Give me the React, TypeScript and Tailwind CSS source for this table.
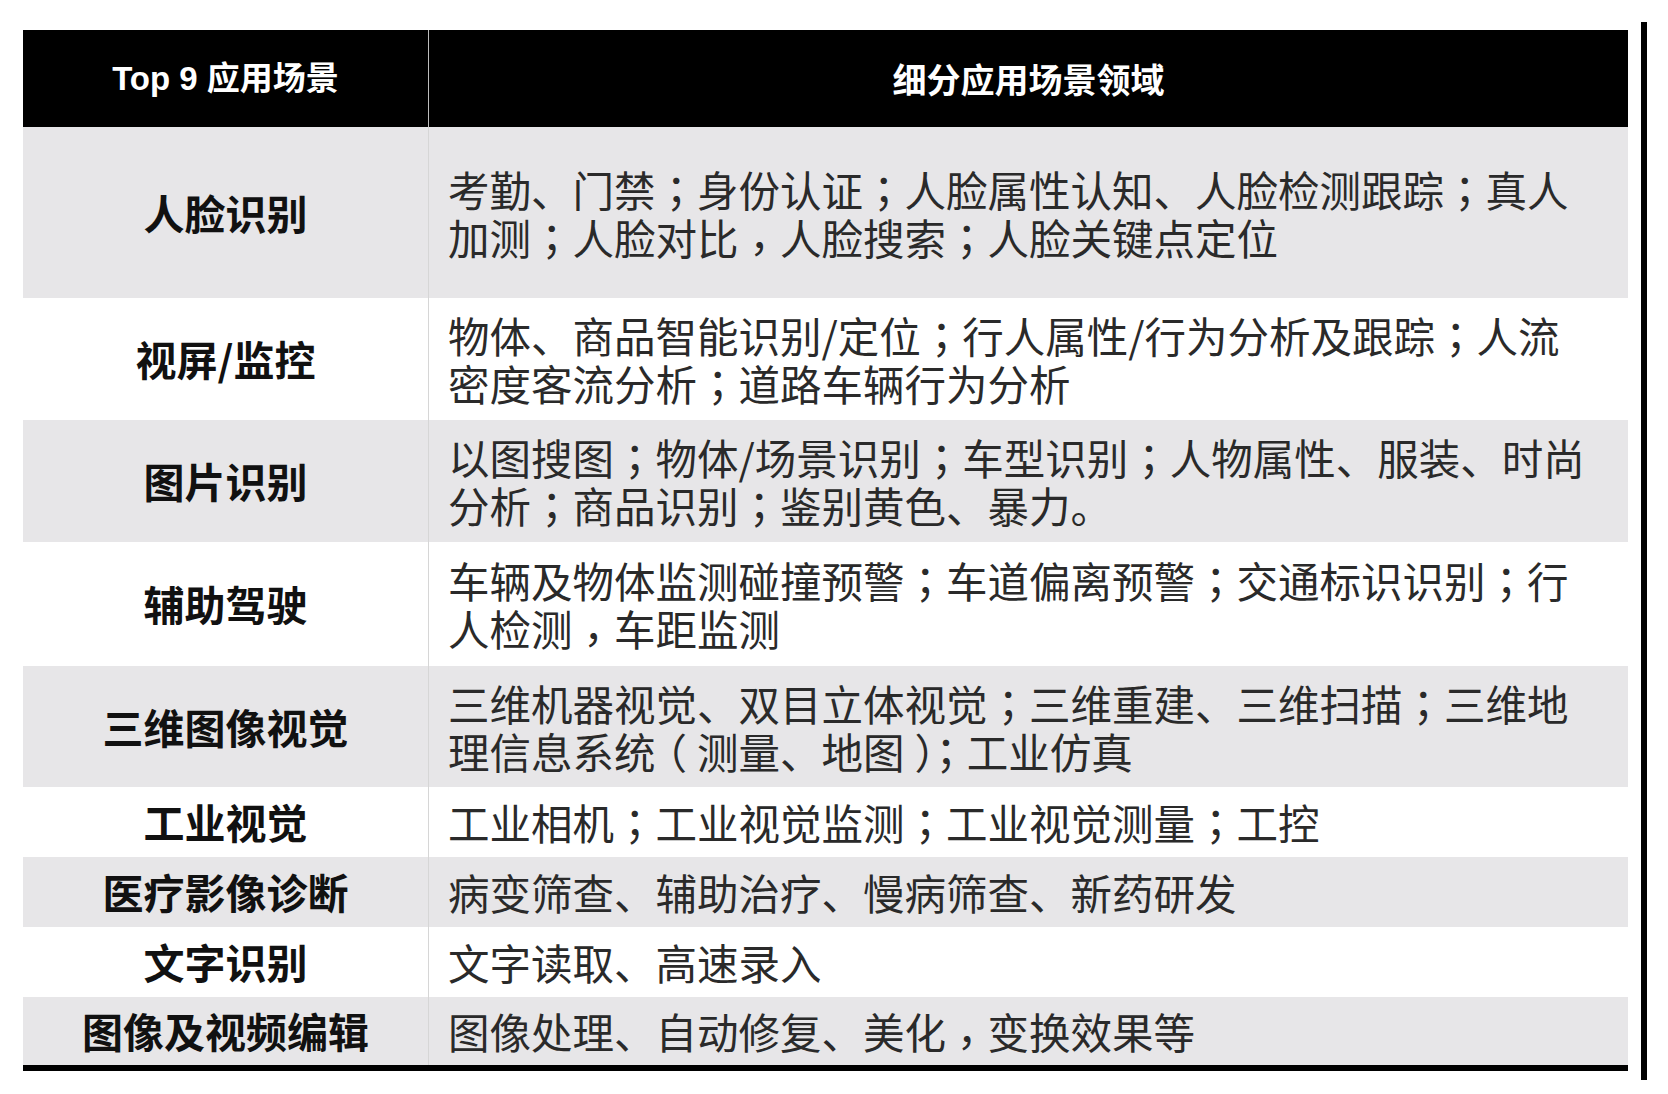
const rows: { label: string; lines: string[]; h: string; gray: boolean }[] = [
  {
    label: "人脸识别",
    lines: ["考勤、门禁；身份认证；人脸属性认知、人脸检测跟踪；真人", "加测；人脸对比，人脸搜索；人脸关键点定位"],
    h: "h-[171px]",
    gray: true,
  },
  {
    label: "视屏/监控",
    lines: ["物体、商品智能识别/定位；行人属性/行为分析及跟踪；人流", "密度客流分析；道路车辆行为分析"],
    h: "h-[122px]",
    gray: false,
  },
  {
    label: "图片识别",
    lines: ["以图搜图；物体/场景识别；车型识别；人物属性、服装、时尚", "分析；商品识别；鉴别黄色、暴力。"],
    h: "h-[122px]",
    gray: true,
  },
  {
    label: "辅助驾驶",
    lines: ["车辆及物体监测碰撞预警；车道偏离预警；交通标识识别；行", "人检测，车距监测"],
    h: "h-[124px]",
    gray: false,
  },
  {
    label: "三维图像视觉",
    lines: ["三维机器视觉、双目立体视觉；三维重建、三维扫描；三维地", "理信息系统（测量、地图）；工业仿真"],
    h: "h-[121px]",
    gray: true,
  },
  { label: "工业视觉", lines: ["工业相机；工业视觉监测；工业视觉测量；工控"], h: "h-[70px]", gray: false },
  { label: "医疗影像诊断", lines: ["病变筛查、辅助治疗、慢病筛查、新药研发"], h: "h-[70px]", gray: true },
  { label: "文字识别", lines: ["文字读取、高速录入"], h: "h-[70px]", gray: false },
  { label: "图像及视频编辑", lines: ["图像处理、自动修复、美化，变换效果等"], h: "h-[68px]", gray: true },
];

const FONT = "font-['Noto_Sans_CJK_SC',sans-serif]";

// 原图里的标点是居中排的：分号、逗号用繁体字形，括号往中间挪一点
const PONTUACAO: Record<string, string> = {
  "；": "font-['Noto_Sans_CJK_TC',sans-serif]",
  "，": "relative top-[9px] font-['Noto_Sans_CJK_TC',sans-serif]",
  "（": "relative -left-[10px]",
  "）": "relative left-[10px]",
};

function Linha({ texto }: { texto: string }) {
  const partes = texto.split(/([；，（）])/).filter(Boolean);
  return (
    <span className="whitespace-nowrap">
      {partes.map((p, i) => (
        <span key={i} className={PONTUACAO[p]}>
          {p}
        </span>
      ))}
    </span>
  );
}

export default function App() {
  return (
    <div className={`flex h-[1094px] w-[1668px] items-start bg-white pl-[23px] ${FONT}`}>
      <div className="mt-[30px] flex w-[1605px] flex-col">
        <div className="flex h-[97px] bg-black text-white">
          <div className="flex w-[406px] items-center justify-center border-r border-[#bdbdbd] text-[33px] font-bold font-['Liberation_Sans','Noto_Sans_CJK_SC',sans-serif]">
            Top 9 应用场景
          </div>
          <div className="flex flex-1 items-center justify-center text-[34px] font-bold">细分应用场景领域</div>
        </div>

        {rows.map((r) => (
          <div key={r.label} className={`flex ${r.h} ${r.gray ? "bg-[#e7e6e8]" : "bg-white"}`}>
            <div className="flex w-[406px] items-center justify-center border-r border-[#d6d6d6] text-[41px] font-bold text-[#111]">
              {r.label}
            </div>
            <div className="flex flex-1 flex-col justify-center pl-[19px] text-[41.5px] leading-[48px] text-[#2a2a2a]">
              {r.lines.map((l) => (
                <Linha key={l} texto={l} />
              ))}
            </div>
          </div>
        ))}

        <div className="h-[6px] bg-black" />
      </div>
      <div className="ml-[13px] mt-[22px] h-[1058px] w-[6px] bg-black" />
    </div>
  );
}
